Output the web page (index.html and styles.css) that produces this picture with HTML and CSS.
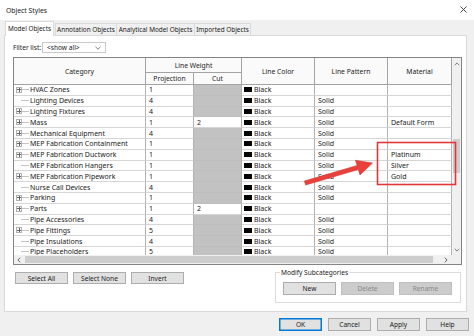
FILE: index.html
```html
<!DOCTYPE html>
<html>
<head>
<meta charset="utf-8">
<title>Object Styles</title>
<link rel="stylesheet" href="styles.css">
</head>
<body>
<div class="dialog">
  <div class="titlebar">
    <span class="title">Object Styles</span>
    <svg class="close" width="7" height="7" viewBox="0 0 7 7"><path d="M0.5 0.5L6.5 6.5M6.5 0.5L0.5 6.5" stroke="#333" stroke-width="0.9" fill="none"/></svg>
  </div>
  <div class="tabs">
    <div class="tab active">Model Objects</div>
    <div class="tab t2">Annotation Objects</div>
    <div class="tab t3">Analytical Model Objects</div>
    <div class="tab t4">Imported Objects</div>
  </div>
  <div class="page">
    <div class="filter">
      <span class="flabel">Filter list:</span>
      <div class="select">
        <span>&lt;show all&gt;</span>
        <svg width="6" height="4" viewBox="0 0 6 4"><path d="M0.5 0.8L3 3.2L5.5 0.8" stroke="#666" stroke-width="0.8" fill="none"/></svg>
      </div>
    </div>
    <div class="grid">
      <div class="grid-main">
        <div class="table">
          <div class="head">
            <div class="h h-cat">Category</div>
            <div class="h h-lw">Line Weight</div>
            <div class="h h-col">Line Color</div>
            <div class="h h-pat">Line Pattern</div>
            <div class="h h-mat">Material</div>
            <div class="h h-proj">Projection</div>
            <div class="h h-cut">Cut</div>
          </div>
          <div class="row"><div class="c cat"><i class="exp"></i><i class="tl"></i><span>HVAC Zones</span></div><div class="c">1</div><div class="c na"></div><div class="c"><b class="sw"></b>Black</div><div class="c"></div><div class="c"></div></div>
          <div class="row"><div class="c cat"><i class="leaf"></i><span>Lighting Devices</span></div><div class="c">4</div><div class="c na"></div><div class="c"><b class="sw"></b>Black</div><div class="c">Solid</div><div class="c"></div></div>
          <div class="row"><div class="c cat"><i class="exp"></i><i class="tl"></i><span>Lighting Fixtures</span></div><div class="c">4</div><div class="c na"></div><div class="c"><b class="sw"></b>Black</div><div class="c">Solid</div><div class="c"></div></div>
          <div class="row"><div class="c cat"><i class="exp"></i><i class="tl"></i><span>Mass</span></div><div class="c">1</div><div class="c cutv">2</div><div class="c"><b class="sw"></b>Black</div><div class="c">Solid</div><div class="c">Default Form</div></div>
          <div class="row"><div class="c cat"><i class="exp"></i><i class="tl"></i><span>Mechanical Equipment</span></div><div class="c">4</div><div class="c na"></div><div class="c"><b class="sw"></b>Black</div><div class="c">Solid</div><div class="c"></div></div>
          <div class="row"><div class="c cat"><i class="exp"></i><i class="tl"></i><span>MEP Fabrication Containment</span></div><div class="c">1</div><div class="c na"></div><div class="c"><b class="sw"></b>Black</div><div class="c">Solid</div><div class="c"></div></div>
          <div class="row"><div class="c cat"><i class="exp"></i><i class="tl"></i><span>MEP Fabrication Ductwork</span></div><div class="c">1</div><div class="c na"></div><div class="c"><b class="sw"></b>Black</div><div class="c">Solid</div><div class="c">Platinum</div></div>
          <div class="row"><div class="c cat"><i class="leaf"></i><span>MEP Fabrication Hangers</span></div><div class="c">1</div><div class="c na"></div><div class="c"><b class="sw"></b>Black</div><div class="c">Solid</div><div class="c">Silver</div></div>
          <div class="row"><div class="c cat"><i class="exp"></i><i class="tl"></i><span>MEP Fabrication Pipework</span></div><div class="c">1</div><div class="c na"></div><div class="c"><b class="sw"></b>Black</div><div class="c">Solid</div><div class="c">Gold</div></div>
          <div class="row"><div class="c cat"><i class="leaf"></i><span>Nurse Call Devices</span></div><div class="c">4</div><div class="c na"></div><div class="c"><b class="sw"></b>Black</div><div class="c">Solid</div><div class="c"></div></div>
          <div class="row"><div class="c cat"><i class="exp"></i><i class="tl"></i><span>Parking</span></div><div class="c">1</div><div class="c na"></div><div class="c"><b class="sw"></b>Black</div><div class="c">Solid</div><div class="c"></div></div>
          <div class="row"><div class="c cat"><i class="exp"></i><i class="tl"></i><span>Parts</span></div><div class="c">1</div><div class="c cutv">2</div><div class="c"><b class="sw"></b>Black</div><div class="c"></div><div class="c"></div></div>
          <div class="row"><div class="c cat"><i class="leaf"></i><span>Pipe Accessories</span></div><div class="c">4</div><div class="c na"></div><div class="c"><b class="sw"></b>Black</div><div class="c">Solid</div><div class="c"></div></div>
          <div class="row"><div class="c cat"><i class="exp"></i><i class="tl"></i><span>Pipe Fittings</span></div><div class="c">5</div><div class="c na"></div><div class="c"><b class="sw"></b>Black</div><div class="c">Solid</div><div class="c"></div></div>
          <div class="row"><div class="c cat"><i class="leaf"></i><span>Pipe Insulations</span></div><div class="c">4</div><div class="c na"></div><div class="c"><b class="sw"></b>Black</div><div class="c">Solid</div><div class="c"></div></div>
          <div class="row"><div class="c cat"><i class="leaf"></i><span>Pipe Placeholders</span></div><div class="c">5</div><div class="c na"></div><div class="c"><b class="sw"></b>Black</div><div class="c">Solid</div><div class="c"></div></div>
        </div>
        <div class="vscroll">
          <svg class="arr-up" width="6" height="4" viewBox="0 0 6 4"><path d="M0.7 3.2L3 0.9L5.3 3.2" stroke="#606060" stroke-width="0.8" fill="none"/></svg>
          <div class="vthumb"></div>
          <svg class="arr-down" width="6" height="4" viewBox="0 0 6 4"><path d="M0.7 0.8L3 3.1L5.3 0.8" stroke="#606060" stroke-width="0.8" fill="none"/></svg>
        </div>
      </div>
      <div class="hscroll">
        <svg class="arr-l" width="4" height="6" viewBox="0 0 4 6"><path d="M3.2 0.7L0.9 3L3.2 5.3" stroke="#404040" stroke-width="0.8" fill="none"/></svg>
        <div class="hthumb"></div>
        <svg class="arr-r" width="4" height="6" viewBox="0 0 4 6"><path d="M0.8 0.7L3.1 3L0.8 5.3" stroke="#404040" stroke-width="0.8" fill="none"/></svg>
        <div class="corner"></div>
      </div>
    </div>
    <div class="bottom">
      <div class="sel-buttons">
        <button class="btn">Select All</button>
        <button class="btn">Select None</button>
        <button class="btn">Invert</button>
      </div>
      <fieldset class="group">
        <legend>Modify Subcategories</legend>
        <div class="group-buttons">
          <button class="btn">New</button>
          <button class="btn disabled">Delete</button>
          <button class="btn disabled">Rename</button>
        </div>
      </fieldset>
    </div>
  </div>
  <div class="footer">
    <button class="btn fbtn ok">OK</button>
    <button class="btn fbtn">Cancel</button>
    <button class="btn fbtn">Apply</button>
    <button class="btn fbtn">Help</button>
  </div>
  <svg class="annot" width="474" height="336" viewBox="0 0 474 336">
    <rect x="377.5" y="142.5" width="78" height="42" fill="none" stroke="#e0373d" stroke-width="1.6"/>
    <polygon points="305.6,185 358.3,169.5 360,175 372.5,163 355.4,160.3 357.1,165.5 304.4,181" fill="#e8413c" stroke="#d83530" stroke-width="0.6" stroke-linejoin="round"/>
  </svg>
</div>
</body>
</html>
```

FILE: styles.css
```css
* { box-sizing: border-box; }
html, body { margin: 0; padding: 0; }
body {
  width: 474px;
  height: 336px;
  overflow: hidden;
  background: #f0f0f0;
  font-family: "Noto Sans", "Liberation Sans", sans-serif;
  font-size: 7px;
  color: #1a1a1a;
  white-space: nowrap;
}
.dialog {
  position: relative;
  width: 474px;
  height: 336px;
  display: flex;
  flex-direction: column;
}
.titlebar {
  height: 20px;
  background: #fff;
  display: flex;
  align-items: center;
  justify-content: space-between;
  padding: 0 7px 0 6px;
}
.title { font-size: 6.8px; line-height: 9px; }
.close { display: block; margin-top: -1px; }

.tabs {
  height: 15px;
  display: flex;
  align-items: flex-end;
  padding-left: 5px;
  font-size: 6.4px;
}
.tab {
  height: 12px;
  border: 1px solid #dadada;
  border-bottom: none;
  background: #f0f0f0;
  display: flex;
  align-items: center;
  justify-content: center;
  line-height: 9px;
  padding-bottom: 1px;
}
.tab.active {
  position: relative;
  z-index: 1;
  width: 49px;
  height: 15px;
  margin-bottom: -1px;
  background: #fff;
  padding-bottom: 2px;
}
.t2 { width: 62px; margin-left: 1px; }
.t3 { width: 79px; margin-left: -1px; }
.t4 { width: 57px; margin-left: -1px; }

.page {
  margin-left: 4px;
  width: 463px;
  height: 277px;
  background: #fff;
  border: 1px solid #d9d9d9;
  padding: 6px 0 0 8px;
}
.filter {
  display: flex;
  align-items: center;
  height: 11px;
}
.flabel { width: 29px; line-height: 9px; font-size: 6.6px; }
.select {
  width: 64px;
  height: 11px;
  border: 1px solid #c9c9c9;
  display: flex;
  align-items: center;
  justify-content: space-between;
  padding: 0 4px 0 4px;
  line-height: 9px;
  font-size: 6.6px;
}

.grid {
  margin-top: 4px;
  width: 449px;
  height: 208px;
  border: 1px solid #848484;
  display: flex;
  flex-direction: column;
}
.grid-main {
  display: flex;
  height: 197px;
  overflow: hidden;
}
.table {
  width: 438px;
  overflow: hidden;
}
.head, .row {
  display: grid;
  grid-template-columns: 132px 48px 48px 73px 73px 64px;
}
.head {
  grid-template-rows: 15px 12px;
  background: #fafafa;
}
.h {
  border-right: 1px solid #a3a3a3;
  border-bottom: 1px solid #a3a3a3;
  display: flex;
  align-items: center;
  justify-content: center;
  line-height: 9px;
  font-size: 6.8px;
}
.h-cat { grid-column: 1; grid-row: 1 / 3; }
.h-lw { grid-column: 2 / 4; grid-row: 1; }
.h-col { grid-column: 4; grid-row: 1 / 3; }
.h-pat { grid-column: 5; grid-row: 1 / 3; }
.h-mat { grid-column: 6; grid-row: 1 / 3; }
.h-proj { grid-column: 2; grid-row: 2; }
.h-cut { grid-column: 3; grid-row: 2; }

.row { height: 10.8px; }
.c {
  border-right: 1px solid #b3b3b3;
  border-bottom: 1px solid #d6d6d6;
  display: flex;
  align-items: center;
  padding-left: 3px;
  line-height: 9px;
  overflow: hidden;
}
.na {
  background: #c2c2c2;
  border-bottom-color: #bdbdbd;
}
.cat { padding-left: 2px; }
.exp {
  display: block;
  width: 6px;
  height: 6px;
  border: 1px solid #b0b0b0;
  background:
    linear-gradient(#666, #666) center / 4px 1px no-repeat,
    linear-gradient(#666, #666) center / 1px 4px no-repeat,
    #fff;
  flex: none;
}
.tl {
  display: block;
  width: 7px;
  border-top: 1px solid #c4c4c4;
  flex: none;
}
.leaf {
  display: block;
  width: 8px;
  margin-left: 5px;
  border-top: 1px solid #c4c4c4;
  flex: none;
}
.cat span { margin-left: 1px; }
.sw {
  display: block;
  width: 8px;
  height: 5px;
  background: #000;
  margin: 0 2px 0 -1px;
  flex: none;
}

.vscroll {
  width: 9px;
  background: #f0f0f0;
  display: flex;
  flex-direction: column;
  align-items: center;
}
.arr-up { margin-top: 4px; display: block; }
.vthumb {
  width: 7px;
  height: 34px;
  margin-top: 73px;
  background: #cdcdcd;
}
.arr-down { margin-top: auto; margin-bottom: 3px; display: block; }

.hscroll {
  height: 9px;
  background: #f0f0f0;
  display: flex;
  align-items: center;
}
.arr-l { margin-left: 3px; display: block; }
.hthumb {
  width: 408px;
  height: 7px;
  margin-left: 4px;
  background: #cdcdcd;
}
.arr-r { margin-left: 11px; display: block; }
.corner { margin-left: auto; width: 9px; height: 9px; background: #f0f0f0; }

.btn {
  font-family: inherit;
  font-size: 6.6px;
  line-height: 9px;
  color: #1a1a1a;
  padding: 0;
  margin: 0;
  background: #e1e1e1;
  border: 1px solid #adadad;
  border-radius: 0;
  display: flex;
  align-items: center;
  justify-content: center;
}
.bottom {
  display: flex;
  justify-content: space-between;
  margin-top: 3px;
  width: 448px;
}
.sel-buttons {
  display: flex;
  gap: 5px;
  margin-top: 4px;
  margin-left: 2px;
}
.sel-buttons .btn { width: 53px; height: 12px; }
.group {
  margin: 0;
  width: 186px;
  padding: 5px 0 7px 7px;
  border: 1px solid #dcdcdc;
  min-width: 0;
}
.group legend {
  padding: 0 1px;
  margin-left: -3px;
  line-height: 9px;
  font-size: 6.6px;
}
.group-buttons { display: flex; gap: 5px; }
.group-buttons .btn { width: 53px; height: 13px; }
.btn.disabled {
  background: #cccccc;
  border-color: #bfbfbf;
  color: #8a8a8a;
}

.footer {
  flex: 1;
  display: flex;
  justify-content: flex-end;
  gap: 6px;
  padding: 6px 5px 0 0;
}
.fbtn { width: 43px; height: 13px; }
.ok { border-color: #0078d7; box-shadow: inset 0 0 0 0.5px #0078d7; }

.annot {
  position: absolute;
  left: 0;
  top: 0;
  pointer-events: none;
}
```
